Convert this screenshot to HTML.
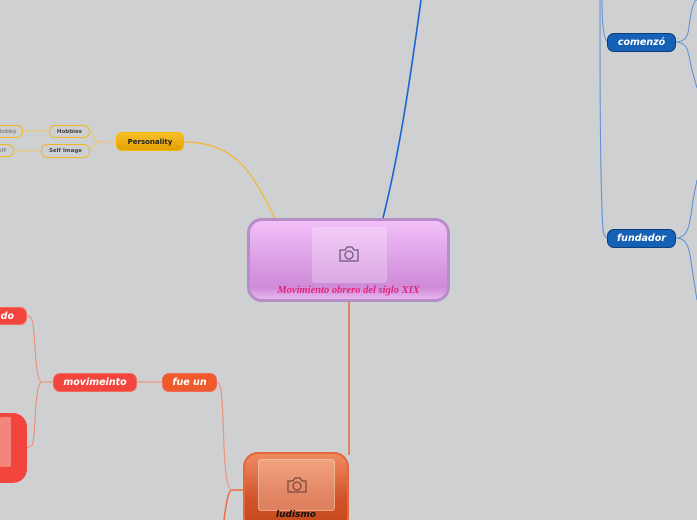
<!DOCTYPE html>
<html style="overflow:hidden;width:697px;height:520px"><head><style>
body{margin:0;width:697px;height:520px;background:#cfd0d2;position:relative;overflow:hidden;font-family:"DejaVu Sans","Liberation Sans",sans-serif}
.n{position:absolute;box-sizing:border-box;display:flex;align-items:center;justify-content:center;font-weight:bold;font-style:italic;color:#fff}
.y{background:linear-gradient(#f8c02a,#e3a000);border:1px solid #f5b800;border-radius:6px;color:#222;font-style:normal;font-size:7px}
.yo{border:1.5px solid #f1b71e;border-radius:6px;color:#444;font-style:normal;font-size:5.5px;font-weight:bold}
.b{background:#1561b5;border:1px solid #0c3f7c;border-radius:7px;font-size:9.5px}
.r{background:#f2453d;border:1px solid #f06a60;border-radius:7px;font-size:9.5px}
</style></head><body>
<svg width="697" height="520" style="position:absolute;left:0;top:0" fill="none">
<path d="M184 142 C240 142 255 180 275 218" stroke="#f3b72c" stroke-width="1.2"/>
<path d="M116 142 H100 C92 142 95 131 90 131 M100 142 C92 142 95 151 90 151" stroke="#f3c56a" stroke-width="1"/>
<path d="M49 131 H23 M41 151 H14" stroke="#f3c56a" stroke-width="1"/>
<path d="M383 218 C400 150 410 80 421 0" stroke="#1a62d4" stroke-width="1.6"/>
<path d="M600 0 C600 80 600 180 603 230 C604 236 606 238 608 238 M602 0 C602 20 603 40 608 42" stroke="#5b8fd8" stroke-width="1"/>
<path d="M675 42 C690 42 688 30 690 20 C692 5 695 0 697 0 M675 42 C690 42 688 55 692 70 L697 88 M676 238 C690 238 690 220 693 200 L697 180 M676 238 C690 238 690 255 693 275 L697 300" stroke="#5b8fd8" stroke-width="1"/>
<path d="M349 302 V455" stroke="#ee6a3d" stroke-width="1.5"/>
<path d="M243 490 H232 C228 490 226 505 224 520" stroke="#ee6a3d" stroke-width="1.5"/>
<path d="M232 490 C222 490 225 420 221 390 C220 384 218 382 217 382" stroke="#ef8a72" stroke-width="1"/>
<path d="M137 382 H162" stroke="#ef8a72" stroke-width="1"/>
<path d="M53 382 H42 C34 382 36 330 32 320 C30 316 29 316 27 316 M42 382 C34 382 36 440 32 445 L27 448" stroke="#ef8a72" stroke-width="1"/>
</svg>
<div class="n yo" style="left:-10px;top:125px;width:33px;height:13px;color:#888">Hobby</div>
<div class="n yo" style="left:49px;top:125px;width:41px;height:13px">Hobbies</div>
<div class="n yo" style="left:-10px;top:144px;width:24px;height:13px;color:#888">elf</div>
<div class="n yo" style="left:41px;top:144px;width:49px;height:14px">Self Image</div>
<div class="n y" style="left:116px;top:132px;width:68px;height:19px">Personality</div>
<div class="n b" style="left:607px;top:33px;width:69px;height:19px">comenzó</div>
<div class="n b" style="left:607px;top:229px;width:69px;height:19px">fundador</div>
<div style="position:absolute;left:247px;top:218px;width:203px;height:84px;box-sizing:border-box;border:3px solid #b58ec8;border-radius:15px;background:linear-gradient(#f3bff9 0%,#e0a6ea 40%,#cf8ad8 85%,#e9b5ef 100%)">
<div style="position:absolute;left:62px;top:6px;width:75px;height:56px;background:rgba(255,255,255,.25);border-radius:3px"></div>
<svg style="position:absolute;left:88px;top:23px" width="22" height="20" viewBox="0 0 22 20" fill="none" stroke="#6e5a78" stroke-width="1.3"><path d="M2 6 H7 L9 3 H14 L16 6 H20 V17 H2 Z"/><circle cx="11" cy="11" r="4"/></svg>
<div style="position:absolute;left:0;right:0;top:64px;text-align:center;font-family:'Liberation Serif',serif;font-weight:bold;font-style:italic;font-size:10.5px;color:#e0257a">Movimiento obrero del siglo XIX</div>
</div>
<div class="n r" style="left:-10px;top:307px;width:37px;height:18px;justify-content:flex-end;padding-right:12px">ado</div>
<div class="n r" style="left:53px;top:373px;width:84px;height:19px">movimeinto</div>
<div class="n r" style="left:162px;top:373px;width:55px;height:19px;background:#ef5a2a">fue un</div>
<div style="position:absolute;left:-20px;top:413px;width:47px;height:70px;background:#f2453d;border-radius:14px"><div style="position:absolute;left:20px;top:4px;width:11px;height:50px;background:#f4857c;border-radius:2px"></div></div>
<div style="position:absolute;left:243px;top:452px;width:106px;height:80px;box-sizing:border-box;border:2px solid #e8643a;border-radius:15px;background:linear-gradient(#ef8a60,#d0532a 60%,#c44818)">
<div style="position:absolute;left:13px;top:5px;width:75px;height:50px;background:rgba(255,220,200,.35);border-radius:3px;border:1px solid rgba(255,220,200,.4)"></div>
<svg style="position:absolute;left:41px;top:21px" width="22" height="20" viewBox="0 0 22 20" fill="none" stroke="#7a4a3a" stroke-width="1.3"><path d="M2 6 H7 L9 3 H14 L16 6 H20 V17 H2 Z"/><circle cx="11" cy="11" r="4"/></svg>
<div style="position:absolute;left:0;right:0;top:56px;text-align:center;font-weight:bold;font-style:italic;font-size:9px;color:#111">ludismo</div>
</div>
</body></html>
